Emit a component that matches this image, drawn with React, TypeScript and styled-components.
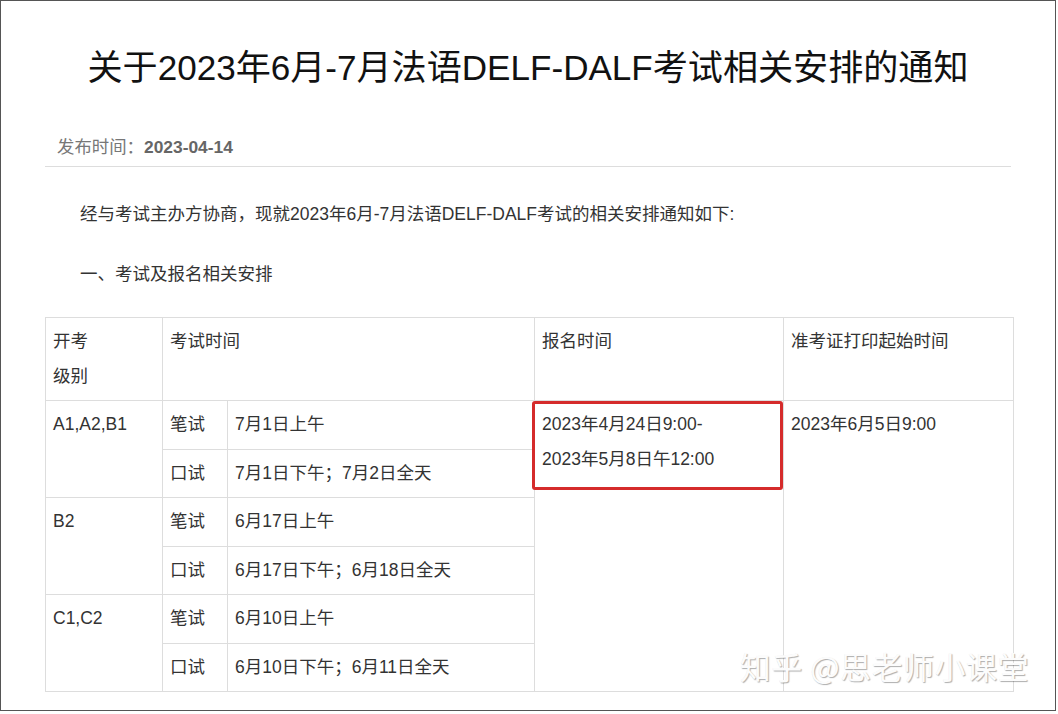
import React from 'react';
import styled, { createGlobalStyle } from 'styled-components';

const GlobalStyle = createGlobalStyle`
    html, body {
        margin: 0;
        padding: 0;
        background: #ffffff;
    }
    body {
        font-family: "Liberation Sans", "Noto Sans CJK SC", sans-serif;
        color: #333333;
    }
`;

const Frame = styled.div`
    position: relative;
    box-sizing: border-box;
    width: 1056px;
    height: 711px;
    border: 1px solid #555555;
    padding: 43px 44px 0 44px;
    overflow: hidden;
`;

const Title = styled.h1`
    margin: 0;
    font-size: 35.1px;
    font-weight: normal;
    line-height: 48px;
    color: #111111;
    text-align: center;
`;

const Meta = styled.div`
    margin-top: 41px;
    padding: 1px 0 6px 12px;
    border-bottom: 1px solid #dddddd;
    font-size: 17.4px;
    line-height: 26px;
    color: #777777;

    b {
        color: #666666;
    }
`;

const Para = styled.p<{ $gap: number }>`
    margin: ${(p) => p.$gap}px 0 0 0;
    padding-left: 35px;
    font-size: 17.5px;
    line-height: 28px;
    color: #333333;
`;

const Table = styled.table`
    margin-top: 29px;
    width: 968px;
    border-collapse: collapse;
    table-layout: fixed;
    font-size: 17.5px;
    color: #333333;
`;

const Cell = styled.td<{ $h?: number }>`
    border: 1px solid #dddddd;
    padding: 6px 7px;
    vertical-align: top;
    line-height: 35px;
    height: ${(p) => (p.$h ? `${p.$h}px` : 'auto')};
    box-sizing: border-box;
`;

const RegCell = styled(Cell)`
    position: relative;
`;

const Highlight = styled.div`
    position: absolute;
    left: -3px;
    top: 0;
    width: 251px;
    height: 89px;
    box-sizing: border-box;
    border: 3px solid #d52b2b;
    border-radius: 3px;
`;

const Watermark = styled.div`
    position: absolute;
    right: 26px;
    top: 643px;
    font-family: "Noto Sans CJK SC", sans-serif;
    font-size: 31px;
    line-height: 44px;
    color: #fcfcfc;
    text-shadow: 1px 1px 1px rgba(0, 0, 0, 0.32), -0.5px -0.5px 0 rgba(0, 0, 0, 0.06);
    letter-spacing: 0.5px;
`;

const rows = [
    { level: 'A1,A2,B1', written: '7月1日上午', oral: '7月1日下午；7月2日全天' },
    { level: 'B2', written: '6月17日上午', oral: '6月17日下午；6月18日全天' },
    { level: 'C1,C2', written: '6月10日上午', oral: '6月10日下午；6月11日全天' },
];

const App: React.FC = (): JSX.Element => {
    return (
        <>
            <GlobalStyle />
            <Frame>
                <Title>关于2023年6月-7月法语DELF-DALF考试相关安排的通知</Title>
                <Meta>
                    发布时间：<b>2023-04-14</b>
                </Meta>
                <Para $gap={33}>经与考试主办方协商，现就2023年6月-7月法语DELF-DALF考试的相关安排通知如下:</Para>
                <Para $gap={32}>一、考试及报名相关安排</Para>
                <Table>
                    <colgroup>
                        <col style={{ width: 117 }} />
                        <col style={{ width: 65 }} />
                        <col style={{ width: 307 }} />
                        <col style={{ width: 249 }} />
                        <col style={{ width: 230 }} />
                    </colgroup>
                    <tbody>
                        <tr>
                            <Cell $h={83}>
                                开考
                                <br />
                                级别
                            </Cell>
                            <Cell colSpan={2}>考试时间</Cell>
                            <Cell>报名时间</Cell>
                            <Cell>准考证打印起始时间</Cell>
                        </tr>
                        {rows.map((r, i) => (
                            <React.Fragment key={r.level}>
                                <tr>
                                    <Cell rowSpan={2}>{r.level}</Cell>
                                    <Cell $h={48.5}>笔试</Cell>
                                    <Cell>{r.written}</Cell>
                                    {i === 0 && (
                                        <>
                                            <RegCell rowSpan={6}>
                                                <Highlight />
                                                2023年4月24日9:00-
                                                <br />
                                                2023年5月8日午12:00
                                            </RegCell>
                                            <Cell rowSpan={6}>2023年6月5日9:00</Cell>
                                        </>
                                    )}
                                </tr>
                                <tr>
                                    <Cell $h={48.5}>口试</Cell>
                                    <Cell>{r.oral}</Cell>
                                </tr>
                            </React.Fragment>
                        ))}
                    </tbody>
                </Table>
                <Watermark>知乎 @思老师小课堂</Watermark>
            </Frame>
        </>
    );
};

export default App;
